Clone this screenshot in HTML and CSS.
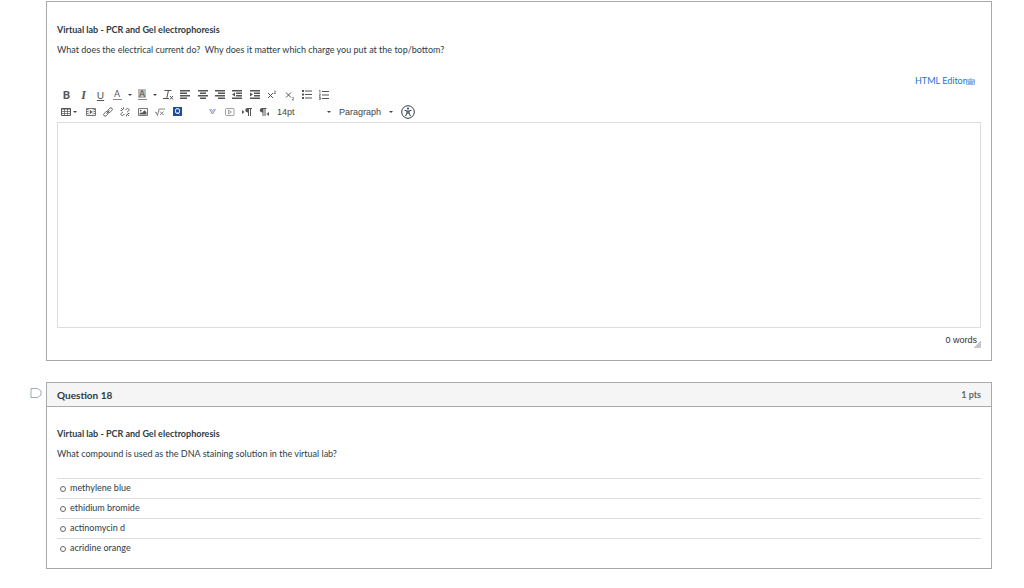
FILE: index.html
```html
<!DOCTYPE html>
<html lang="en">
<head>
  <meta charset="UTF-8">
  <meta name="viewport" content="width=device-width, initial-scale=1">
  <title>Quiz</title>
  <link rel="stylesheet" href="styles.css">
</head>
<body>
  <main class="quiz">

    <section class="question essay">
      <div class="question-text">
        <h2>Virtual lab - PCR and Gel electrophoresis</h2>
        <p>What does the electrical current do?&nbsp; Why does it matter which charge you put at the top/bottom?</p>
      </div>

      <div class="editor-switch">
        <a href="#">HTML Editor<svg width="9" height="8" viewBox="0 0 9 8" fill="none" stroke="currentColor" stroke-width=".6"><path d="M.4 2.800h8.200v4.500H.4zM1 4.200h7M1.500 5.200h6M2 6.300h5M4 2.800c0-1 .8-.8 1.200-2"/></svg></a>
      </div>

      <div class="toolbar">
        <div class="toolbar-row">
          <div class="group basic">
            <button type="button" aria-label="Bold" class="bold">B</button>
            <button type="button" aria-label="Italic" class="italic">I</button>
            <button type="button" aria-label="Underline" class="underline">U</button>
          </div>
          <div class="group color">
            <button type="button" aria-label="Text color"><span class="letter">A</span></button>
            <button type="button" aria-label="Text colors" class="caret"></button>
            <button type="button" aria-label="Background color"><span class="letter"><span class="shaded">A</span></span></button>
            <button type="button" aria-label="Background colors" class="caret"></button>
          </div>
          <div class="group format">
            <button type="button" aria-label="Clear formatting"><svg width="12" height="12" viewBox="0 0 12 12" fill="none" stroke="currentColor"><path d="M2.500 1.500h7M6.300 2 4.800 9M1 9.500h6M8 7l3 3.500M11 7l-3 3.500"/></svg></button>
            <button type="button" aria-label="Align left"><svg width="10" height="9" viewBox="0 0 10 9"><path d="M0 0h10v1.500H0zM0 2.500h7V4H0zM0 5h10v1.500H0zM0 7.500h7V9H0z"/></svg></button>
            <button type="button" aria-label="Align center"><svg width="10" height="9" viewBox="0 0 10 9"><path d="M0 0h10v1.500H0zM2 2.500h6V4H2zM0 5h10v1.500H0zM2 7.500h6V9H2z"/></svg></button>
            <button type="button" aria-label="Align right"><svg width="10" height="9" viewBox="0 0 10 9"><path d="M0 0h10v1.500H0zM3 2.500h7V4H3zM0 5h10v1.500H0zM3 7.500h7V9H3z"/></svg></button>
            <button type="button" aria-label="Outdent"><svg width="10" height="9" viewBox="0 0 10 9"><path d="M0 0h10v1.500H0zM4 2.500h6V4H4zM4 5h6v1.500H4zM0 7.500h10V9H0zM3 2.500v4l-3-2z"/></svg></button>
            <button type="button" aria-label="Indent"><svg width="10" height="9" viewBox="0 0 10 9"><path d="M0 0h10v1.500H0zM4 2.500h6V4H4zM4 5h6v1.500H4zM0 7.500h10V9H0zM0 2.500v4l3-2z"/></svg></button>
            <button type="button" aria-label="Superscript"><svg width="10" height="12" viewBox="0 0 10 12" fill="none" stroke="currentColor"><path d="M1 4l5 5M6 4 1 9"/><path d="M7 2.400c.5-.8 1.800-.6 1.600.3L7 4.400h2" stroke-width=".7"/></svg></button>
            <button type="button" aria-label="Subscript"><svg width="10" height="12" viewBox="0 0 10 12" fill="none" stroke="currentColor"><path d="M1 3.500l5 5M6 3.500l-5 5"/><path d="M7 8.900c.5-.8 1.800-.6 1.600.3L7 10.900h2" stroke-width=".7"/></svg></button>
            <button type="button" aria-label="Bulleted list"><svg width="10" height="9" viewBox="0 0 10 9"><path d="M0 0h2v2H0zM0 3.500h2v2H0zM0 7h2v2H0zM3 .5h7v1H3zM3 4h7v1H3zM3 7.500h7v1H3z"/></svg></button>
            <button type="button" aria-label="Numbered list"><svg width="10" height="10" viewBox="0 0 10 10"><path d="M3 1h7v1H3zM3 4.500h7v1H3zM3 8h7v1H3z"/><path d="M0 .8 1 .4V3M0 4h1.400v1.200H.3v1.200h1.200M0 7.500h1.400v2H0M.5 8.500h1" fill="none" stroke="currentColor" stroke-width=".7"/></svg></button>
          </div>
        </div>

        <div class="toolbar-row">
          <div class="group table">
            <button type="button" aria-label="Table"><svg width="10" height="8" viewBox="0 0 10 8" fill="none" stroke="currentColor"><path d="M.5.500h9v7h-9zM0 1h10"/><path d="M.5 3.500h9M.5 5.500h9M3.500 1v6.500M6.500 1v6.500" stroke-width=".7"/></svg></button>
            <button type="button" aria-label="Table menu" class="caret"></button>
          </div>
          <div class="group insert">
            <button type="button" aria-label="Media"><svg width="10" height="8" viewBox="0 0 10 8" fill="none" stroke="currentColor"><path d="M.5.500h9v7h-9z" stroke-width=".8"/><path d="M1.700 1v6M8.300 1v6" stroke-dasharray="1 1"/><path d="M4 2v4l2.500-2z" fill="currentColor" stroke="none"/><path d="M3 .5v7M7 .5v7" stroke-width=".4"/></svg></button>
            <button type="button" aria-label="Link"><svg width="10" height="10" viewBox="0 0 10 10" fill="none" stroke="currentColor" stroke-width=".9"><rect x="4.500" y="1.700" width="5.200" height="3" rx="1.500" transform="rotate(-45 7 3.200)"/><rect x=".3" y="5.300" width="5.200" height="3" rx="1.500" transform="rotate(-45 3 6.800)"/><path d="m3.500 6.500 3-3"/></svg></button>
            <button type="button" aria-label="Remove link"><svg width="10" height="10" viewBox="0 0 10 10" fill="none" stroke="currentColor" stroke-width=".9"><path d="m5.500 3 1-1c1.500-1.500 3.500.5 2 2l-1.500 1.200M4.500 7l-1 1C2 9.500 0 7.500 1.500 6l1.500-1M1 1l2 2M3.500.5v1.700M.5 3.500h1.700M9 9 7 7M6.500 9.500V7.800M9.500 6.500H7.800"/></svg></button>
            <button type="button" aria-label="Image"><svg width="10" height="8" viewBox="0 0 10 8"><path d="M.5.500h9v7h-9z" fill="none" stroke="currentColor" stroke-width=".8"/><circle cx="2.700" cy="2.600" r=".9"/><path d="M1.500 6.500V5.500L3 4.200l1 .8 2.500-2.800 2 2v2.300z"/></svg></button>
            <button type="button" aria-label="Equation"><svg width="10" height="8" viewBox="0 0 10 8" fill="none" stroke="currentColor" stroke-width=".7"><path d="M0 4.500 1 4l1.500 3.500L4 1h6M5 3.500l3.500 3.500M8.500 3.500 5 7"/></svg></button>
            <button type="button" aria-label="Quick tool"><svg width="9" height="9" viewBox="0 0 9 9" fill="none"><path d="M0 0h9v9H0z" fill="#1b4f96"/><rect x="2.500" y="1.700" width="4" height="4.600" rx="1.500" stroke="#fff"/><path d="m4.500 5.500 1.800 1.800" stroke="#fff"/></svg></button>
            <span class="blank"></span>
            <button type="button" aria-label="Video tool"><svg width="7" height="7" viewBox="0 0 7 7" fill="none"><path d="M.5 1 3.500 6 6.500 1" stroke="#6d92c7"/><path d="M2 .8 3.500 3.500 5 .8" stroke="#b1a6ca"/></svg></button>
            <button type="button" aria-label="Record"><svg width="10" height="8" viewBox="0 0 10 8" fill="none" stroke="#777" stroke-width=".7"><rect x=".5" y=".5" width="8.500" height="7" rx="1"/><path d="M3.500 2v4l3-2z"/></svg></button>
            <button type="button" aria-label="Left to right"><svg width="10" height="10" viewBox="0 0 10 10"><path d="M5.500 1H10v1H9v7H8V2H7v7H6V5.500C2.500 5.500 2.500 1 5.500 1zM0 3v4l2.500-2z"/></svg></button>
            <button type="button" aria-label="Right to left"><svg width="10" height="10" viewBox="0 0 10 10"><path d="M3 1h4.500v1h-1v7h-1V2h-1v7h-1V5.500C0 5.500 0 1 3 1zM10 5v4L7.500 7z"/></svg></button>
          </div>
          <span class="dropdown size">
            <select aria-label="Font size"><option>14pt</option></select>
          </span>
          <span class="dropdown block">
            <select aria-label="Block format"><option>Paragraph</option></select>
          </span>
          <button type="button" aria-label="Check accessibility" class="a11y"><svg width="14" height="14" viewBox="0 0 14 14" fill="none" stroke="#2d3b45"><circle cx="7" cy="7" r="6.300"/><circle cx="7" cy="3.500" r="1" fill="#2d3b45" stroke="none"/><path d="M3.500 5.300 6 6v2l-1.500 3.200M10.500 5.300 8 6v2l1.500 3.200M6 6h2M6 8h2"/></svg></button>
        </div>
      </div>

      <textarea class="editor" aria-label="Answer"></textarea>

      <div class="statusbar">
        <span>0 words</span>
        <svg class="grip" width="7" height="7" viewBox="0 0 7 7"><path d="M7 0v7H0z" fill="#ccc"/><path d="M7 0 0 7M7 3 3 7" stroke="#aaa" stroke-width=".7"/></svg>
      </div>
    </section>

    <section class="question">
      <button type="button" class="flag" aria-label="Flag question"><svg width="12" height="10" viewBox="0 0 12 10"><path d="M1 .5h6.500L11 3v4L7.500 9.500H1z" fill="#fff" stroke="#8297a5" stroke-width=".8"/></svg></button>
      <header class="question-header">
        <h3>Question 18</h3>
        <span class="points">1 pts</span>
      </header>
      <div class="question-text">
        <h2>Virtual lab - PCR and Gel electrophoresis</h2>
        <p>What compound is used as the DNA staining solution in the virtual lab?</p>
      </div>
      <div class="answers">
        <label><input type="radio" name="q18">methylene blue</label>
        <label><input type="radio" name="q18">ethidium bromide</label>
        <label><input type="radio" name="q18">actinomycin d</label>
        <label><input type="radio" name="q18">acridine orange</label>
      </div>
    </section>

  </main>
</body>
</html>
```
FILE: styles.css
```css
:root{
  --text:#2d3b45;
  --border:#aaa;
  --icon:#555;
}

*{box-sizing:border-box;margin:0;padding:0;}

body{
  font-family:Lato,sans-serif;
  font-size:9px;
  line-height:20px;
  color:var(--text);
  background:#fff;
}

button{
  font:inherit;
  color:inherit;
  background:none;
  border:none;
  cursor:pointer;
}

svg{display:block;}

/* ---------- Questions ---------- */
.quiz{
  padding:1px 32px 19px 46px;
  display:flex;
  flex-direction:column;
  gap:21px;
}

.question{
  position:relative;
  border:1px solid var(--border);
}

.question-header{
  display:flex;
  justify-content:space-between;
  align-items:center;
  height:24px;
  padding:0 10px;
  background:#f5f5f5;
  border-bottom:1px solid var(--border);
}

.question-header h3{font-size:10px;}

.points{
  font-weight:bold;
  color:#666;
}

.flag{
  position:absolute;
  left:-17px;
  top:5px;
}

.question-text{padding:18px 10px 0;}
.question-header + .question-text{padding-top:17px;}

.question-text h2{font-size:9px;}

/* ---------- Editor ---------- */
.essay{padding-bottom:10px;}

.editor-switch{
  display:flex;
  justify-content:flex-end;
  padding:16px 16px 0;
  line-height:10px;
}

.editor-switch a{
  display:flex;
  align-items:center;
  color:#2a6fd0;
  text-decoration:none;
}

.toolbar{
  color:var(--icon);
  fill:var(--icon);
}

.toolbar-row{
  display:flex;
  align-items:center;
  height:17px;
  padding-left:11px;
}

.group{
  display:flex;
  height:16px;
}

.group button,
.blank{
  flex:1;
  display:flex;
  align-items:center;
  justify-content:center;
  line-height:12px;
}

.basic{width:51px;}
.color{width:50px;}
.format{width:174px;}
.table{width:24px;}
.insert{width:191px;}

.group .bold{font-weight:900;font-size:11px;}
.group .italic{font-family:"Liberation Serif",serif;font-style:italic;font-weight:bold;font-size:12px;}
.group .underline{font-size:10px;text-decoration:underline;}

.letter{
  display:flex;
  justify-content:center;
  width:9px;
  padding-bottom:1px;
  line-height:9px;
  border-bottom:1px solid #888;
}

.shaded{width:8px;background:#bbb;}

.group .caret{flex:0 0 9px;}

.caret::before,
.dropdown::after{
  content:"";
  border:2px solid transparent;
  border-top-color:#444;
  border-bottom:none;
}

.table .caret{
  justify-content:flex-start;
}

.dropdown{
  display:flex;
  align-items:center;
  justify-content:space-between;
}

.size{width:54px;margin-left:4px;}
.block{width:54px;margin-left:8px;}

.dropdown select{
  appearance:none;
  border:none;
  background:none;
  font:9px/16px "Liberation Sans",sans-serif;
  color:#444;
}

.a11y{margin-left:8px;}

.editor{
  display:block;
  width:calc(100% - 20px);
  height:206px;
  margin:2px 10px 0;
  border:1px solid #ddd;
  resize:none;
  outline:none;
}

.statusbar{
  position:relative;
  display:flex;
  justify-content:flex-end;
  padding:2px 14px 0;
  font-family:"Liberation Sans",sans-serif;
  color:#333;
}

.grip{
  position:absolute;
  right:10px;
  bottom:2px;
}

/* ---------- Answers ---------- */
.answers{padding:14px 10px 10px;}

.answers label{
  display:flex;
  align-items:center;
  height:20px;
  padding-bottom:2px;
  border-top:1px solid #ddd;
}

.answers input{
  appearance:none;
  width:6px;
  height:6px;
  margin:3px 4px 0 3px;
  border:1px solid #666;
  border-radius:50%;
}

.answers input:checked{background:#666;}
```
